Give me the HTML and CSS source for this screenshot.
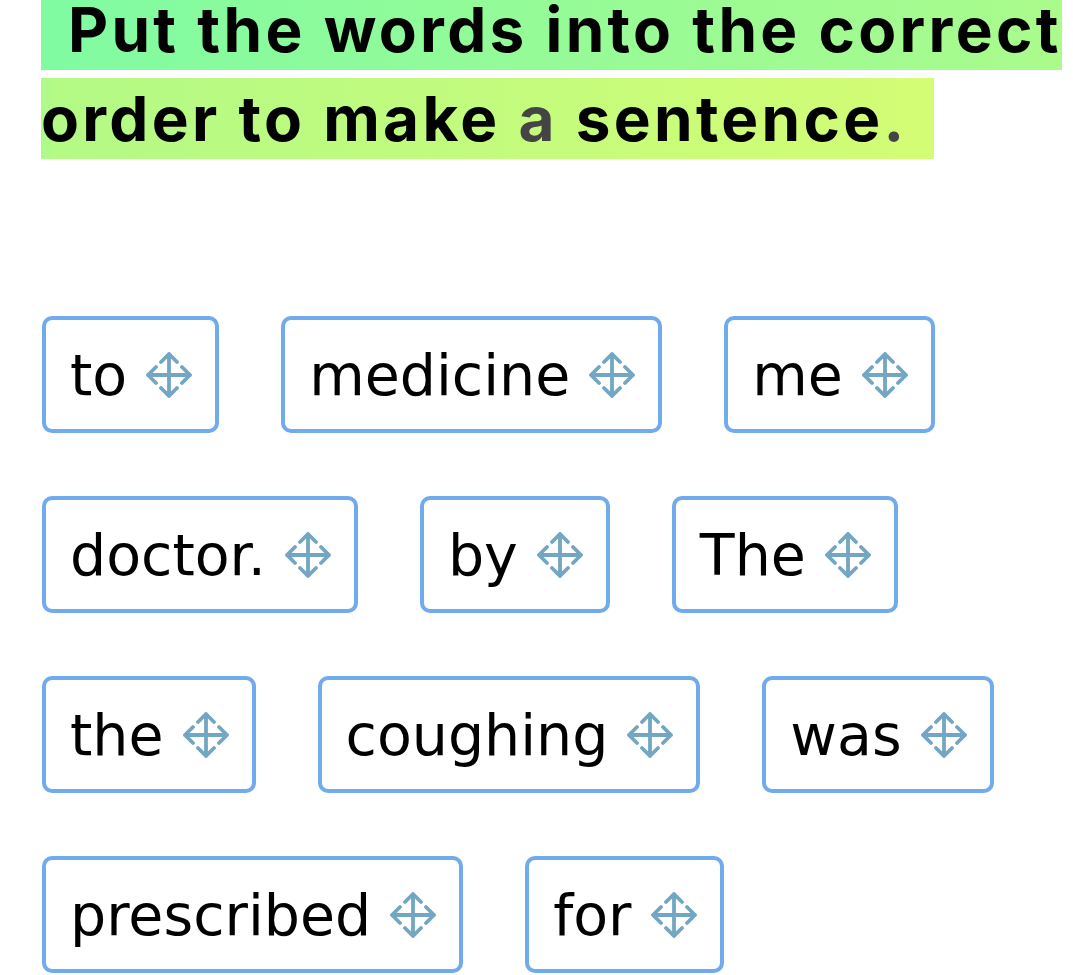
FILE: index.html
```html
<!DOCTYPE html>
<html lang="en">
<head>
<meta charset="utf-8">
<title>Word order</title>
<link rel="stylesheet" href="styles.css">
</head>
<body>
<main class="page">
  <h1 class="title"><span class="hl">Put the words into the correct order to make <span class="dim">a</span> sentence<span class="dim">.</span></span></h1>
  <div class="words">
    <div class="chip"><span>to</span><svg class="move" viewBox="0 0 46 46"><path d="M23 2v42M2 23h42M15 10l8-8 8 8M15 36l8 8 8-8M10 15l-8 8 8 8M36 15l8 8-8 8"/></svg></div>
    <div class="chip"><span>medicine</span><svg class="move" viewBox="0 0 46 46"><path d="M23 2v42M2 23h42M15 10l8-8 8 8M15 36l8 8 8-8M10 15l-8 8 8 8M36 15l8 8-8 8"/></svg></div>
    <div class="chip"><span>me</span><svg class="move" viewBox="0 0 46 46"><path d="M23 2v42M2 23h42M15 10l8-8 8 8M15 36l8 8 8-8M10 15l-8 8 8 8M36 15l8 8-8 8"/></svg></div>
    <div class="chip"><span>doctor.</span><svg class="move" viewBox="0 0 46 46"><path d="M23 2v42M2 23h42M15 10l8-8 8 8M15 36l8 8 8-8M10 15l-8 8 8 8M36 15l8 8-8 8"/></svg></div>
    <div class="chip"><span>by</span><svg class="move" viewBox="0 0 46 46"><path d="M23 2v42M2 23h42M15 10l8-8 8 8M15 36l8 8 8-8M10 15l-8 8 8 8M36 15l8 8-8 8"/></svg></div>
    <div class="chip"><span>The</span><svg class="move" viewBox="0 0 46 46"><path d="M23 2v42M2 23h42M15 10l8-8 8 8M15 36l8 8 8-8M10 15l-8 8 8 8M36 15l8 8-8 8"/></svg></div>
    <div class="chip"><span>the</span><svg class="move" viewBox="0 0 46 46"><path d="M23 2v42M2 23h42M15 10l8-8 8 8M15 36l8 8 8-8M10 15l-8 8 8 8M36 15l8 8-8 8"/></svg></div>
    <div class="chip"><span>coughing</span><svg class="move" viewBox="0 0 46 46"><path d="M23 2v42M2 23h42M15 10l8-8 8 8M15 36l8 8 8-8M10 15l-8 8 8 8M36 15l8 8-8 8"/></svg></div>
    <div class="chip"><span>was</span><svg class="move" viewBox="0 0 46 46"><path d="M23 2v42M2 23h42M15 10l8-8 8 8M15 36l8 8 8-8M10 15l-8 8 8 8M36 15l8 8-8 8"/></svg></div>
    <div class="chip"><span>prescribed</span><svg class="move" viewBox="0 0 46 46"><path d="M23 2v42M2 23h42M15 10l8-8 8 8M15 36l8 8 8-8M10 15l-8 8 8 8M36 15l8 8-8 8"/></svg></div>
    <div class="chip"><span>for</span><svg class="move" viewBox="0 0 46 46"><path d="M23 2v42M2 23h42M15 10l8-8 8 8M15 36l8 8 8-8M10 15l-8 8 8 8M36 15l8 8-8 8"/></svg></div>
  </div>
</main>
</body>
</html>
```
FILE: styles.css
```css
html, body {
  margin: 0;
  padding: 0;
  background: #fff;
}
.page {
  padding: 0 0 0 41px;
  overflow: hidden;
  height: 975px;
  box-sizing: border-box;
}
.title {
  margin: -15px 0 0 0;
  font-family: Inter, "DejaVu Sans", sans-serif;
  font-weight: 700;
  font-size: 62px;
  letter-spacing: 3.3px;
  line-height: 89px;
  color: #000;
}
.hl {
  padding: 3px 27px 3px 27px;
  background: linear-gradient(90deg, #80fba2 0%, #aafb8c 53%, #b3fa86 54%, #d3fd74 100%);
  -webkit-box-decoration-break: slice;
  box-decoration-break: slice;
}
.dim {
  color: #444;
}
.words {
  display: flex;
  flex-wrap: wrap;
  column-gap: 62px;
  row-gap: 63px;
  margin-top: 153px;
  padding-left: 1px;
}
.chip {
  box-sizing: border-box;
  height: 117px;
  display: flex;
  align-items: center;
  gap: 19px;
  padding: 0 23px 0 24px;
  border: 4px solid #72aaee;
  border-radius: 10px;
  font-family: "DejaVu Sans", sans-serif;
  font-size: 57px;
  color: #000;
}
.move {
  flex: none;
  width: 46px;
  height: 46px;
  fill: none;
  stroke: #72a6c2;
  stroke-width: 3.8;
  stroke-linecap: round;
  stroke-linejoin: round;
}
```
